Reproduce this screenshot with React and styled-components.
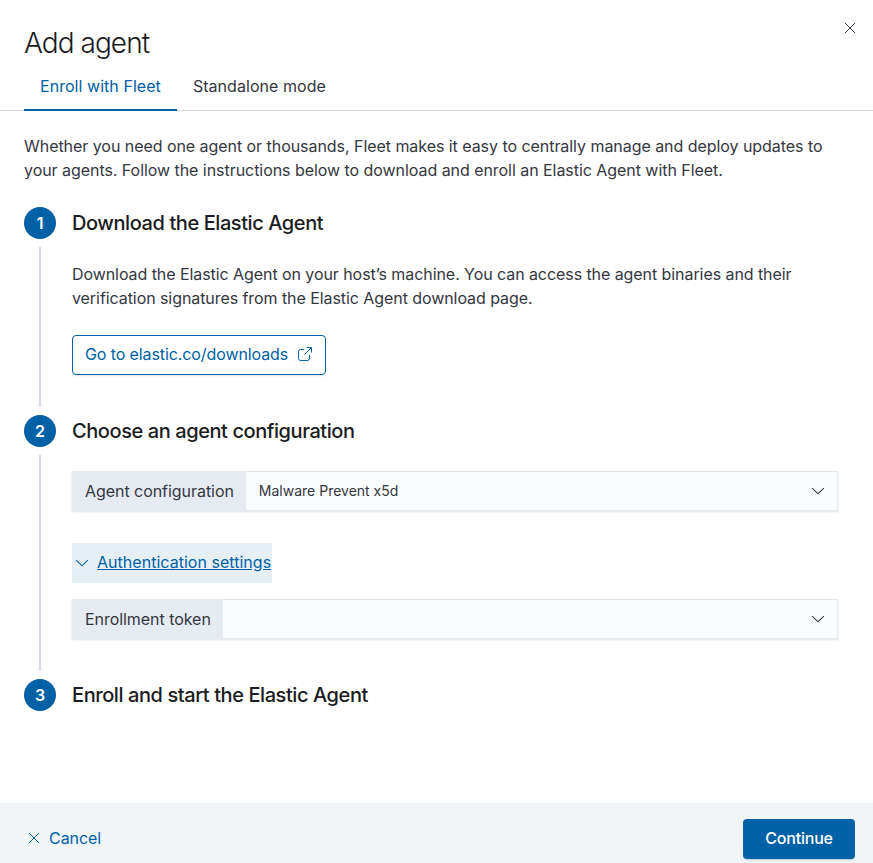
import { createGlobalStyle, styled } from "styled-components";

const GlobalStyle = createGlobalStyle`
  html, body {
    margin: 0;
    padding: 0;
    background: #fff;
  }
  * {
    box-sizing: border-box;
  }
`;

const Flyout = styled.div`
  position: relative;
  width: 873px;
  height: 863px;
  display: flex;
  flex-direction: column;
  overflow: hidden;
  font-family: Inter, "Liberation Sans", sans-serif;
  font-size: 16px;
  line-height: 24px;
  letter-spacing: -0.05px;
  color: #343741;
`;

const CloseButton = styled.button`
  position: absolute;
  top: 20px;
  right: 15px;
  width: 16px;
  height: 16px;
  padding: 0;
  border: 0;
  background: none;
  color: #343741;
  display: flex;
`;

const Header = styled.header`
  height: 111px;
  padding: 24px 24px 0;
  border-bottom: 1px solid #d3dae6;
`;

const Title = styled.h1`
  margin: 0;
  height: 38px;
  font-size: 28px;
  line-height: 38px;
  font-weight: 300;
  letter-spacing: -0.95px;
  color: #1a1c21;
`;

const Tabs = styled.div`
  display: flex;
`;

const Tab = styled.div`
  height: 49px;
  padding: 0 16px;
  display: flex;
  align-items: center;
  font-size: 16px;
  letter-spacing: 0.05px;
  color: ${(p) => (p.$active ? "#0061a6" : "#343741")};
  border-bottom: 2px solid ${(p) => (p.$active ? "#0061a6" : "transparent")};
`;

const Body = styled.div`
  flex: 1;
  padding: 23px 24px 0;
`;

const Intro = styled.p`
  margin: 0 0 25px;
`;

const Step = styled.section`
  display: flex;
  flex-direction: column;
`;

const StepHead = styled.div`
  display: flex;
  align-items: center;
  gap: 16px;
  height: 32px;
`;

const StepNumber = styled.span`
  width: 32px;
  height: 32px;
  border-radius: 50%;
  background: #0061a6;
  color: #fff;
  font-size: 16px;
  font-weight: 600;
  display: flex;
  align-items: center;
  justify-content: center;
`;

const StepTitle = styled.h2`
  margin: 0;
  font-size: 20px;
  line-height: 32px;
  font-weight: 500;
  letter-spacing: -0.42px;
  color: #1a1c21;
`;

const StepBody = styled.div`
  margin: 8px 0 8px 15px;
  padding: 15px 11px 32px 31px;
  border-left: 2px solid #d3dae6;
`;

const StepText = styled.p`
  margin: 0 0 25px;
  letter-spacing: -0.07px;
`;

const OutlineButton = styled.a`
  display: inline-flex;
  align-items: center;
  gap: 9px;
  height: 40px;
  padding: 0 12px 2px;
  border: 1px solid #0061a6;
  border-radius: 4px;
  letter-spacing: -0.1px;
  color: #0061a6;
  box-shadow: 0 2px 2px -1px rgba(152, 162, 179, 0.3);
`;

const FormRow = styled.div`
  display: flex;
  height: 40px;
  border: 1px solid #e4e7ee;
  background: #fbfcfd;
  box-shadow: 0 1px 2px rgba(152, 162, 179, 0.3);
  margin: ${(p) => p.$margin || 0};
`;

const FormLabel = styled.label`
  background: #e6ebf2;
  margin: -1px 0 -1px -1px;
  padding: 0 12px 0 13px;
  display: flex;
  align-items: center;
  letter-spacing: -0.05px;
  color: #343741;
`;

const SelectValue = styled.div`
  flex: 1;
  padding-left: 13px;
  display: flex;
  align-items: center;
  font-size: 14px;
  letter-spacing: 0;
  color: #343741;
`;

const SelectChevron = styled.span`
  display: flex;
  align-items: center;
  padding-right: 11px;
  color: #343741;
`;

const AuthToggle = styled.button`
  display: flex;
  align-items: center;
  gap: 7px;
  width: 200px;
  height: 40px;
  padding: 0 0 0 2px;
  border: 0;
  background: #e6eff6;
  font: inherit;
  letter-spacing: 0.03px;
  color: #0061a6;
  margin-bottom: 16px;
`;

const AuthLabel = styled.span`
  text-decoration: underline;
  white-space: nowrap;
  padding-bottom: 2px;
`;

const Footer = styled.footer`
  height: 60px;
  flex-shrink: 0;
  background: #f2f5f8;
  padding: 16px 18px 0 24px;
  display: flex;
  justify-content: space-between;
`;

const CancelButton = styled.a`
  display: flex;
  align-items: center;
  gap: 7px;
  height: 40px;
  padding: 0 0 2px 2px;
  color: #0061a6;
`;

const ContinueButton = styled.button`
  width: 112px;
  height: 40px;
  padding: 0 0 2px;
  border: 0;
  border-radius: 4px;
  background: #0061a6;
  color: #fff;
  font: inherit;
  font-weight: 500;
  letter-spacing: -0.2px;
  box-shadow: 0 2px 2px -1px rgba(54, 97, 126, 0.3);
`;

function CrossIcon({ size = 16 }) {
  return (
    <svg width={size} height={size} viewBox="0 0 16 16" fill="none" stroke="currentColor" strokeWidth="1">
      <path d="M3 3l10 10M13 3L3 13" />
    </svg>
  );
}

function ChevronIcon() {
  return (
    <svg width="16" height="16" viewBox="0 0 16 16" fill="none" stroke="currentColor" strokeWidth="1.1">
      <path d="M2.2 5.2L8 10.8l5.8-5.6" />
    </svg>
  );
}

function ExternalIcon() {
  return (
    <svg width="16" height="16" viewBox="0 0 16 16" fill="none" stroke="currentColor" strokeWidth="1">
      <path d="M7 3.5H3.5a2 2 0 0 0-2 2v7a2 2 0 0 0 2 2h7a2 2 0 0 0 2-2V9" />
      <path d="M7.5 8.5l6.5-6.5M9.5 1.5h5v5" />
    </svg>
  );
}

export default function App() {
  return (
    <Flyout>
      <GlobalStyle />
      <CloseButton aria-label="Close">
        <CrossIcon />
      </CloseButton>
      <Header>
        <Title>Add agent</Title>
        <Tabs>
          <Tab $active>Enroll with Fleet</Tab>
          <Tab>Standalone mode</Tab>
        </Tabs>
      </Header>
      <Body>
        <Intro>
          Whether you need one agent or thousands, Fleet makes it easy to centrally manage and deploy updates to
          your agents. Follow the instructions below to download and enroll an Elastic Agent with Fleet.
        </Intro>
        <Step>
          <StepHead>
            <StepNumber>1</StepNumber>
            <StepTitle>Download the Elastic Agent</StepTitle>
          </StepHead>
          <StepBody>
            <StepText>
              Download the Elastic Agent on your host’s machine. You can access the agent binaries and their
              verification signatures from the Elastic Agent download page.
            </StepText>
            <OutlineButton>
              Go to elastic.co/downloads
              <ExternalIcon />
            </OutlineButton>
          </StepBody>
        </Step>
        <Step>
          <StepHead>
            <StepNumber>2</StepNumber>
            <StepTitle>Choose an agent configuration</StepTitle>
          </StepHead>
          <StepBody>
            <FormRow $margin="1px 0 32px">
              <FormLabel>Agent configuration</FormLabel>
              <SelectValue>Malware Prevent x5d</SelectValue>
              <SelectChevron>
                <ChevronIcon />
              </SelectChevron>
            </FormRow>
            <AuthToggle>
              <ChevronIcon />
              <AuthLabel>Authentication settings</AuthLabel>
            </AuthToggle>
            <FormRow>
              <FormLabel>Enrollment token</FormLabel>
              <SelectValue />
              <SelectChevron>
                <ChevronIcon />
              </SelectChevron>
            </FormRow>
          </StepBody>
        </Step>
        <Step>
          <StepHead>
            <StepNumber>3</StepNumber>
            <StepTitle>Enroll and start the Elastic Agent</StepTitle>
          </StepHead>
        </Step>
      </Body>
      <Footer>
        <CancelButton>
          <CrossIcon />
          Cancel
        </CancelButton>
        <ContinueButton>Continue</ContinueButton>
      </Footer>
    </Flyout>
  );
}
